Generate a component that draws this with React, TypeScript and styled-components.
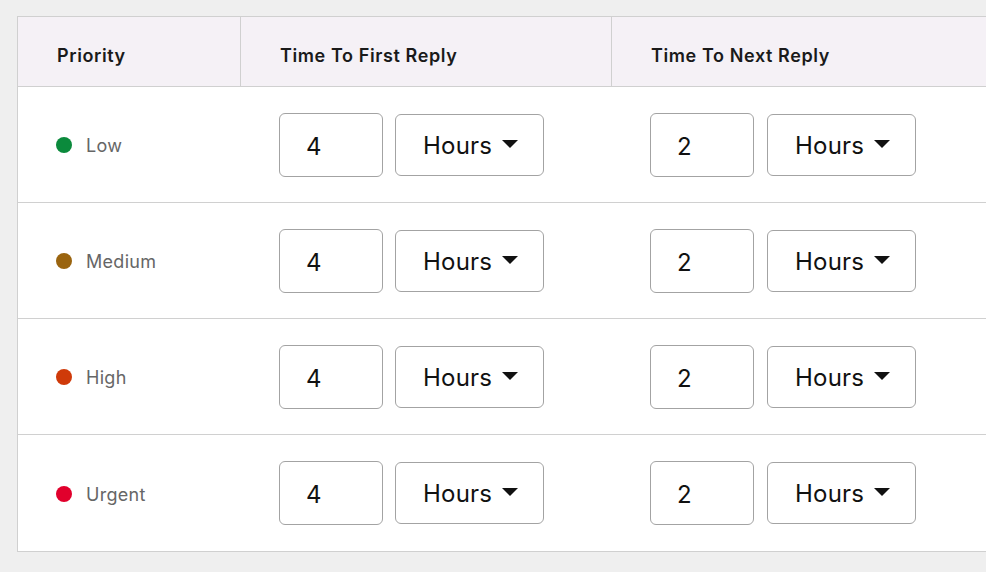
import { FC } from "react";
import styled, { createGlobalStyle } from "styled-components";

const GlobalStyle = createGlobalStyle`
  html, body {
    margin: 0;
    background: #efefef;
    font-family: Inter, "Noto Sans", sans-serif;
  }
  * {
    box-sizing: border-box;
  }
`;

type Priority = {
  name: string;
  color: string;
};

const PRIORITIES: Priority[] = [
  { name: "Low", color: "#0b8a3c" },
  { name: "Medium", color: "#9a640f" },
  { name: "High", color: "#cf3a09" },
  { name: "Urgent", color: "#e1002c" },
];

const App = () => (
  <>
    <GlobalStyle />
    <Page>
      <Table>
        <HeaderRow>
          <HeaderCell>Priority</HeaderCell>
          <HeaderCell>Time To First Reply</HeaderCell>
          <HeaderCell>Time To Next Reply</HeaderCell>
        </HeaderRow>
        {PRIORITIES.map((p) => (
          <Row key={p.name}>
            <PriorityCell>
              <Dot color={p.color} />
              <PriorityName>{p.name}</PriorityName>
            </PriorityCell>
            <TimeCell>
              <TimeField value="4" unit="Hours" gap={12} />
            </TimeCell>
            <TimeCell>
              <TimeField value="2" unit="Hours" gap={13} />
            </TimeCell>
          </Row>
        ))}
      </Table>
    </Page>
  </>
);

const TimeField: FC<{ value: string; unit: string; gap: number }> = ({
  value,
  unit,
  gap,
}) => (
  <Field $gap={gap}>
    <NumberInput>{value}</NumberInput>
    <UnitSelect>
      {unit}
      <Caret viewBox="0 0 16 8">
        <path d="M0 0h16L8 8z" fill="#111" />
      </Caret>
    </UnitSelect>
  </Field>
);

const Page = styled.div`
  width: 986px;
  height: 572px;
  padding: 16px 0 0 17px;
  overflow: hidden;
`;

const Table = styled.div`
  width: 1100px;
  background: #fff;
  border: 1px solid #d0d0d0;
  border-right: none;
`;

const Grid = styled.div`
  display: grid;
  grid-template-columns: 223px 371px 1fr;
`;

const HeaderRow = styled(Grid)`
  height: 70px;
  background: #f5f1f6;
  border-bottom: 1px solid #d0d0d0;
`;

const HeaderCell = styled.div`
  display: flex;
  align-items: center;
  padding: 7px 0 0 39px;
  border-right: 1px solid #d0d0d0;
  font-size: 18px;
  font-weight: 600;
  letter-spacing: 0.6px;
  color: #1a1a1a;
`;

const Row = styled(Grid)`
  height: 116px;

  &:not(:last-child) {
    border-bottom: 1px solid #d0d0d0;
  }
`;

const PriorityCell = styled.div`
  display: flex;
  align-items: center;
  padding: 2px 0 0 38px;
`;

const Dot = styled.span<{ color: string }>`
  width: 16px;
  height: 16px;
  border-radius: 50%;
  background: ${({ color }) => color};
  margin: -1px 14px 0 0;
`;

const PriorityName = styled.span`
  font-size: 18px;
  letter-spacing: 0.3px;
  color: #666;
`;

const TimeCell = styled.div`
  display: flex;
  align-items: center;
  padding-left: 38px;
`;

const Field = styled.div<{ $gap: number }>`
  display: flex;
  align-items: center;
  gap: ${({ $gap }) => $gap}px;
`;

const NumberInput = styled.div`
  width: 104px;
  height: 64px;
  display: flex;
  align-items: center;
  padding: 3px 0 0 26px;
  border: 1px solid #a3a3a3;
  border-radius: 6px;
  font-size: 24px;
  color: #111;
`;

const UnitSelect = styled.div`
  width: 149px;
  height: 62px;
  display: flex;
  align-items: center;
  padding: 1px 0 0 27px;
  border: 1px solid #a3a3a3;
  border-radius: 6px;
  font-size: 24px;
  letter-spacing: 0.2px;
  color: #111;
`;

const Caret = styled.svg`
  width: 16px;
  height: 8px;
  margin-left: 10px;
  margin-top: -3px;
`;

export default App;
